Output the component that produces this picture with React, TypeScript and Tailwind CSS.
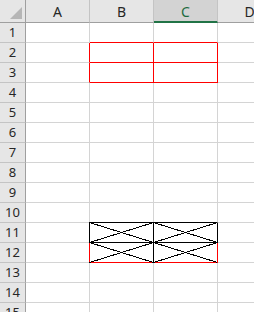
const cols = ['A', 'B', 'C', 'D'];
const rows = Array.from({ length: 15 }, (_, i) => i + 1);

function rightBorder(r: number, c: string) {
  if (c === 'A' && (r === 2 || r === 3 || r === 12)) return 'border-r-[#ff0000]';
  if (c === 'A' && r === 11) return 'border-r-black';
  if ((c === 'B' || c === 'C') && (r === 2 || r === 3)) return 'border-r-[#ff0000]';
  if ((c === 'B' || c === 'C') && r === 11) return 'border-r-black';
  if (c === 'B' && r === 12) return 'border-r-black';
  if (c === 'C' && r === 12) return 'border-r-[#ff0000]';
  return 'border-r-[#d4d4d4]';
}

function bottomBorder(r: number, c: string) {
  if (c !== 'B' && c !== 'C') return 'border-b-[#d4d4d4]';
  if (r >= 1 && r <= 3) return 'border-b-[#ff0000]';
  if (r === 10 || r === 11) return 'border-b-black';
  if (r === 12) return 'border-b-[#ff0000]';
  return 'border-b-[#d4d4d4]';
}

function hasCross(r: number, c: string) {
  return (r === 11 || r === 12) && (c === 'B' || c === 'C');
}

function Cross() {
  return (
    <svg
      className="absolute top-[-1px] left-[-1px] pointer-events-none"
      width="65"
      height="21"
      viewBox="0 0 65 21"
      shapeRendering="crispEdges"
    >
      <line x1="0.5" y1="0.5" x2="64.5" y2="20.5" stroke="#000" strokeWidth="1" />
      <line x1="0.5" y1="20.5" x2="64.5" y2="0.5" stroke="#000" strokeWidth="1" />
    </svg>
  );
}

export default function App() {
  return (
    <div className="w-[254px] h-[312px] overflow-hidden bg-white font-['Noto_Sans','Liberation_Sans',sans-serif]">
      <div className="grid w-[282px] grid-cols-[26px_64px_64px_64px_64px] grid-rows-[23px_repeat(15,20px)]">
        <div className="relative bg-[#e6e6e6] border-r border-b border-r-[#9f9f9f] border-b-[#9f9f9f]">
          <svg className="absolute left-[10px] top-[7px]" width="13" height="13" viewBox="0 0 13 13">
            <polygon points="12,0 12,12 0,12" fill="#b6b6b6" />
          </svg>
        </div>
        {cols.map((c) => (
          <div
            key={c}
            className={
              c === 'C'
                ? 'flex items-center justify-center bg-[#d3d3d3] border-r border-r-[#c4c4c4] border-b-2 border-b-[#217346] text-[14px] text-[#1d6b40] pt-[1px]'
                : 'flex items-center justify-center bg-[#e6e6e6] border-r border-r-[#c4c4c4] border-b border-b-[#9f9f9f] text-[14px] text-[#262626]'
            }
          >
            {c}
          </div>
        ))}
        {rows.map((r) => (
          <div key={r} className="contents">
            <div className="flex items-center justify-center bg-[#e6e6e6] border-r border-b border-r-[#9f9f9f] border-b-[#c4c4c4] text-[13px] text-[#262626]">
              {r}
            </div>
            {cols.map((c) => (
              <div
                key={c}
                className={`relative border-r border-b ${rightBorder(r, c)} ${bottomBorder(r, c)}`}
              >
                {hasCross(r, c) && <Cross />}
              </div>
            ))}
          </div>
        ))}
      </div>
    </div>
  );
}
